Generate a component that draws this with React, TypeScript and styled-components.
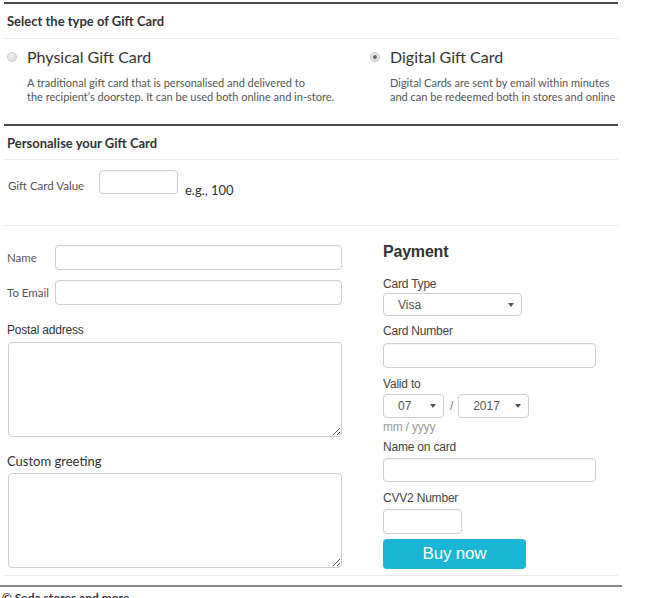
import React from "react";
import styled, { createGlobalStyle } from "styled-components";

const GlobalStyle = createGlobalStyle`
  html, body {
    margin: 0;
    background: #fff;
  }
  body {
    font-family: Lato, "Liberation Sans", Arial, sans-serif;
    color: #333;
  }
  * {
    box-sizing: border-box;
  }
`;

const Page = styled.div`
  width: 622px;
  padding-top: 2px;
`;

const Section = styled.section`
  margin-left: 4px;
  width: 614px;
  border-top: 2px solid #4a4a4a;
`;

const SectionTitle = styled.h2<{ $height: number }>`
  margin: 0;
  padding-left: 3px;
  height: ${(p) => p.$height}px;
  line-height: ${(p) => p.$height}px;
  font-size: 13px;
  font-weight: 700;
  color: #333;
  border-bottom: 1px solid #ececec;
`;

const Options = styled.div`
  display: grid;
  grid-template-columns: 363px 1fr;
  padding: 8px 0 20px;
`;

const Option = styled.label`
  display: grid;
  grid-template-columns: 23px 1fr;
  align-items: center;
`;

const Radio = styled.span<{ $checked?: boolean }>`
  position: relative;
  width: 10px;
  height: 10px;
  margin-left: 3px;
  border-radius: 50%;
  border: 1px solid #c9c9c9;
  background: radial-gradient(circle at 40% 35%, #f4f4f4, #d6d6d6);

  &::after {
    content: "";
    display: ${(p) => (p.$checked ? "block" : "none")};
    position: absolute;
    left: 2px;
    top: 2px;
    width: 4px;
    height: 4px;
    border-radius: 50%;
    background: #6a6a6a;
  }
`;

const OptionTitle = styled.span`
  font-size: 16px;
  line-height: 20px;
  color: #333;
`;

const OptionText = styled.p`
  grid-column: 2;
  margin: 9px 0 0;
  font-size: 11px;
  line-height: 14px;
  color: #555;
`;

const ValueRow = styled.div`
  display: flex;
  align-items: flex-end;
  padding: 10px 0 31px 4px;
  border-bottom: 1px solid #ececec;
`;

const InlineLabel = styled.span<{ $width: number }>`
  width: ${(p) => p.$width}px;
  flex: none;
  font-size: 11.5px;
  line-height: 16px;
  color: #555;
`;

const Hint = styled.span`
  margin: 0 0 -4px 7px;
  font-size: 13px;
  line-height: 16px;
  color: #333;
`;

const Field = styled.input<{ $width?: number; $height?: number }>`
  display: block;
  width: ${(p) => (p.$width ? `${p.$width}px` : "100%")};
  height: ${(p) => p.$height ?? 25}px;
  margin: 0;
  border: 1px solid #cfcfcf;
  border-radius: 4px;
  box-shadow: inset 0 1px 1px rgba(0, 0, 0, 0.04);
  background: #fff;
  outline: none;
`;

const Area = styled.textarea`
  display: block;
  width: 334px;
  height: 95px;
  margin: 4px 0 0 1px;
  border: 1px solid #cfcfcf;
  border-radius: 4px;
  resize: both;
  background: #fff;
`;

const Main = styled.div`
  display: grid;
  grid-template-columns: 335px 213px;
  column-gap: 41px;
  padding: 0 0 6px 3px;
  border-bottom: 1px solid #ececec;
`;

const LeftColumn = styled.div`
  display: flex;
  flex-direction: column;
  padding-top: 19px;
`;

const FieldRow = styled.div<{ $gap?: number }>`
  display: flex;
  align-items: center;
  margin-top: ${(p) => p.$gap ?? 0}px;
`;

const BlockLabel = styled.div<{ $gap: number; $lato?: boolean }>`
  margin-top: ${(p) => p.$gap}px;
  font-family: ${(p) =>
    p.$lato
      ? `Lato, "Liberation Sans", Arial, sans-serif`
      : `"Liberation Sans", Arial, sans-serif`};
  font-size: ${(p) => (p.$lato ? 13 : 12)}px;
  letter-spacing: ${(p) => (p.$lato ? 0 : -0.2)}px;
  line-height: 16px;
  color: #333;
`;

const Payment = styled.div`
  display: flex;
  flex-direction: column;
  padding-top: 16px;
  font-family: "Liberation Sans", Arial, sans-serif;
  letter-spacing: -0.2px;
`;

const PaymentTitle = styled.h3`
  margin: 0;
  font-size: 16px;
  line-height: 20px;
  font-weight: 700;
  color: #333;
`;

const PayLabel = styled.div<{ $gap: number; $below: number; $muted?: boolean }>`
  margin-top: ${(p) => p.$gap}px;
  margin-bottom: ${(p) => p.$below}px;
  font-size: 12px;
  line-height: 14px;
  color: ${(p) => (p.$muted ? "#999" : "#444")};
`;

const SelectWrap = styled.div<{ $width: number }>`
  position: relative;
  width: ${(p) => p.$width}px;
  flex: none;
`;

const SelectBox = styled.select<{ $height: number }>`
  appearance: none;
  -webkit-appearance: none;
  display: block;
  width: 100%;
  height: ${(p) => p.$height}px;
  margin: 0;
  padding: 0 0 0 14px;
  border: 1px solid #cfcfcf;
  border-radius: 4px;
  background: #fff;
  font-family: "Liberation Sans", Arial, sans-serif;
  font-size: 12px;
  color: #555;
  outline: none;
`;

const Caret = styled.span`
  position: absolute;
  right: 8px;
  top: 50%;
  margin-top: -2px;
  width: 0;
  height: 0;
  border-left: 3px solid transparent;
  border-right: 3px solid transparent;
  border-top: 4px solid #555;
  pointer-events: none;
`;

const DateRow = styled.div`
  display: flex;
  align-items: center;
`;

const Slash = styled.span`
  margin: 0 5px 0 6px;
  font-size: 12px;
  color: #777;
`;

const BuyButton = styled.button`
  width: 143px;
  height: 30px;
  margin-top: 5px;
  border: none;
  border-radius: 4px;
  background: #1bb6d5;
  color: #fff;
  font-family: "Liberation Sans", Arial, sans-serif;
  font-size: 17px;
  letter-spacing: -0.2px;
  cursor: pointer;
`;

const Footer = styled.footer`
  margin-top: 9px;
  border-top: 2px solid #8a8a8a;
  padding: 3px 0 0 2px;
  font-size: 12px;
  font-weight: 700;
  color: #333;
`;

type SelectProps = {
  width: number;
  height: number;
  value: string;
  options: string[];
};

const Select = ({ width, height, value, options }: SelectProps) => (
  <SelectWrap $width={width}>
    <SelectBox $height={height} defaultValue={value}>
      {options.map((o) => (
        <option key={o}>{o}</option>
      ))}
    </SelectBox>
    <Caret />
  </SelectWrap>
);

const months = Array.from({ length: 12 }, (_, i) => String(i + 1).padStart(2, "0"));
const years = ["2017", "2018", "2019", "2020", "2021", "2022"];

export default function App() {
  return (
    <Page>
      <GlobalStyle />
      <Section>
        <SectionTitle $height={35}>Select the type of Gift Card</SectionTitle>
        <Options>
          <Option>
            <Radio />
            <OptionTitle>Physical Gift Card</OptionTitle>
            <OptionText>
              A traditional gift card that is personalised and delivered to
              <br />
              the recipient’s doorstep. It can be used both online and in-store.
            </OptionText>
          </Option>
          <Option>
            <Radio $checked />
            <OptionTitle>Digital Gift Card</OptionTitle>
            <OptionText>
              Digital Cards are sent by email within minutes
              <br />
              and can be redeemed both in stores and online
            </OptionText>
          </Option>
        </Options>
      </Section>

      <Section>
        <SectionTitle $height={34}>Personalise your Gift Card</SectionTitle>
        <ValueRow>
          <InlineLabel $width={91}>Gift Card Value</InlineLabel>
          <Field $width={79} $height={24} />
          <Hint>e.g., 100</Hint>
        </ValueRow>

        <Main>
          <LeftColumn>
            <FieldRow>
              <InlineLabel $width={48}>Name</InlineLabel>
              <Field />
            </FieldRow>
            <FieldRow $gap={10}>
              <InlineLabel $width={48}>To Email</InlineLabel>
              <Field />
            </FieldRow>
            <BlockLabel $gap={17}>Postal address</BlockLabel>
            <Area />
            <BlockLabel $gap={16} $lato>
              Custom greeting
            </BlockLabel>
            <Area />
          </LeftColumn>

          <Payment>
            <PaymentTitle>Payment</PaymentTitle>
            <PayLabel $gap={15} $below={2}>
              Card Type
            </PayLabel>
            <Select width={139} height={23} value="Visa" options={["Visa", "MasterCard", "Amex"]} />
            <PayLabel $gap={8} $below={5}>
              Card Number
            </PayLabel>
            <Field $height={25} />
            <PayLabel $gap={9} $below={3}>
              Valid to
            </PayLabel>
            <DateRow>
              <Select width={61} height={24} value="07" options={months} />
              <Slash>/</Slash>
              <Select width={71} height={24} value="2017" options={years} />
            </DateRow>
            <PayLabel $gap={2} $below={0} $muted>
              mm / yyyy
            </PayLabel>
            <PayLabel $gap={6} $below={4}>
              Name on card
            </PayLabel>
            <Field $height={24} />
            <PayLabel $gap={9} $below={4}>
              CVV2 Number
            </PayLabel>
            <Field $width={79} $height={25} />
            <BuyButton type="button">Buy now</BuyButton>
          </Payment>
        </Main>
      </Section>

      <Footer>© Seda stores and more</Footer>
    </Page>
  );
}
